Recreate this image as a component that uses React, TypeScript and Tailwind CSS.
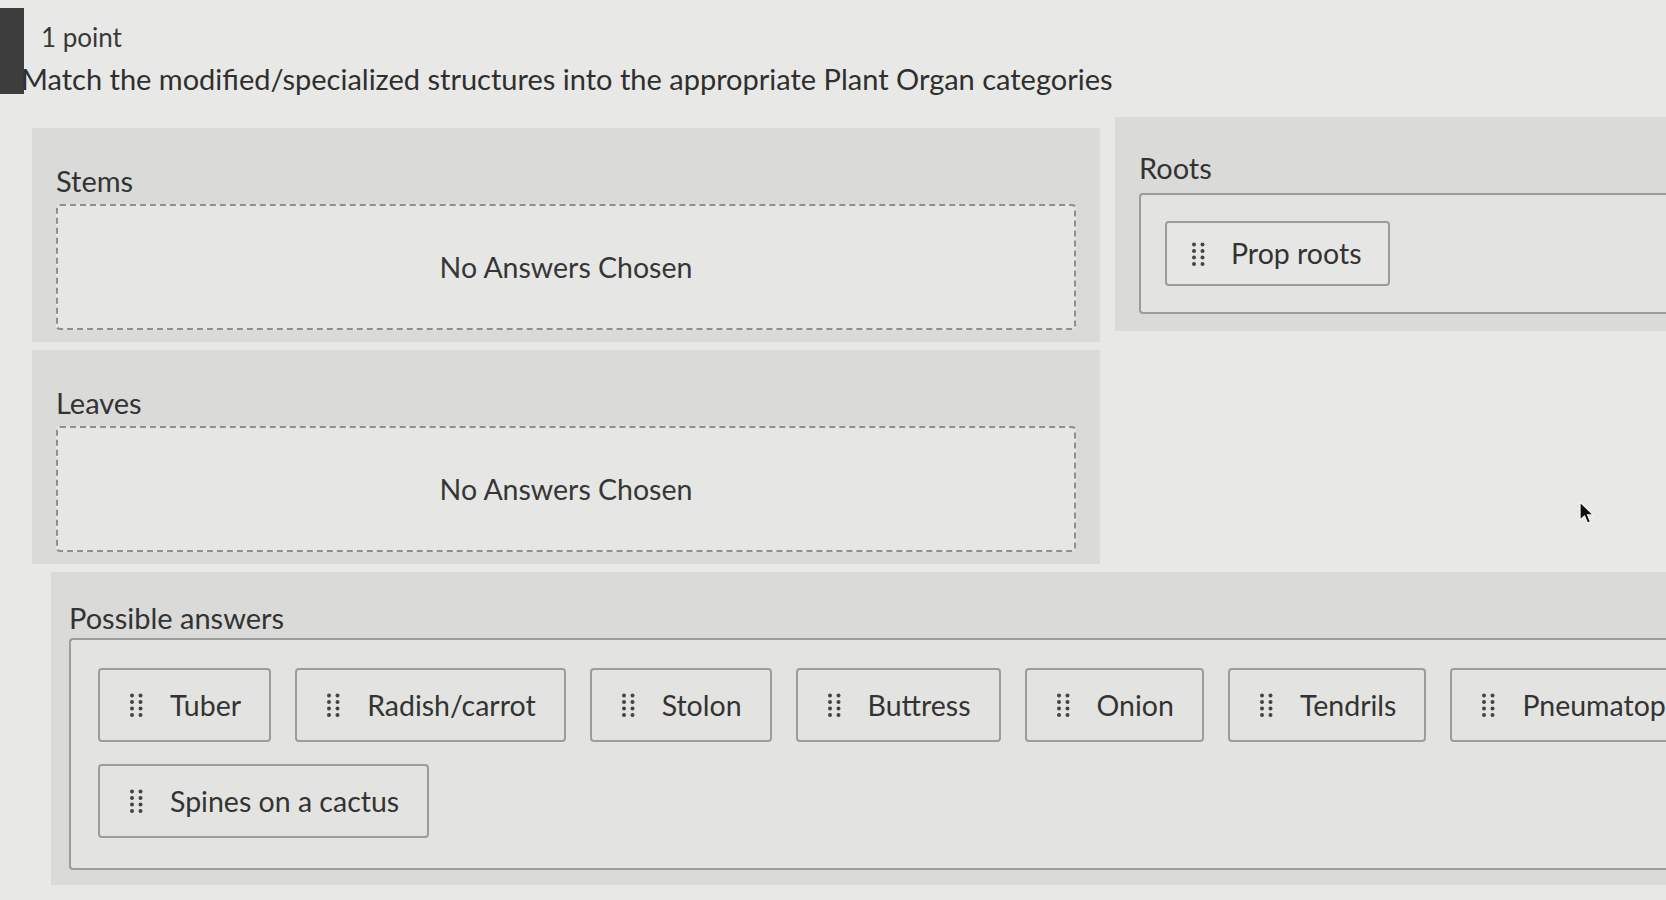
const answers = ["Tuber", "Radish/carrot", "Stolon", "Buttress", "Onion", "Tendrils", "Pneumatophores", "Spines on a cactus"];

function Handle() {
  return (
    <svg width="15" height="24" viewBox="0 0 15 24" className="shrink-0">
      {[2.5, 9, 15.5, 22].map((y) =>
        [3, 11.5].map((x) => <circle key={`${x}-${y}`} cx={x} cy={y} r="2" fill="#444" />)
      )}
    </svg>
  );
}

function Chip({ label }: { label: string }) {
  return (
    <div className="flex h-[74px] shrink-0 items-center gap-[26px] whitespace-nowrap rounded-[4px] border-2 border-[#9c9c9b] bg-[#e3e3e1] pl-[29px] pr-[28px] text-[28.5px] text-[#333]">
      <Handle />
      <span>{label}</span>
    </div>
  );
}

function DropZone({ label }: { label: string }) {
  return (
    <div className="flex h-[214px] flex-col bg-[#dadad8] px-[24px] pt-[34px]">
      <div className="text-[29px] leading-[38px] text-[#333]">{label}</div>
      <div className="mt-[4px] flex h-[126px] items-center justify-center rounded-[4px] border-2 border-dashed border-[#8f8f8e] bg-[#e6e6e4] text-[28.5px] text-[#363636]">
        No Answers Chosen
      </div>
    </div>
  );
}

export default function App() {
  return (
    <div
      className="relative h-[900px] w-[1666px] overflow-hidden bg-[#e8e8e6]"
      style={{ fontFamily: "Lato, 'Open Sans', sans-serif" }}
    >
      <div className="flex pt-[8px]">
        <div className="h-[86px] w-[24px] shrink-0 bg-[#3d3d3d]" />
        <div className="flex flex-col">
          <div className="pl-[17px] pt-[13px] text-[26px] leading-[32px] text-[#383838]">1 point</div>
          <div className="-ml-[3px] mt-[9px] whitespace-nowrap text-[29px] leading-[34px] text-[#2f2f2f]">
            Match the modified/specialized structures into the appropriate Plant Organ categories
          </div>
        </div>
      </div>

      <div className="mt-[32px] flex gap-[15px] pl-[32px]">
        <div className="flex w-[1068px] shrink-0 flex-col gap-[8px]">
          <DropZone label="Stems" />
          <DropZone label="Leaves" />
        </div>
        <div className="-mt-[11px] flex h-[214px] flex-1 flex-col bg-[#dadad8] pl-[24px] pt-[32px]">
          <div className="text-[29px] leading-[38px] text-[#333]">Roots</div>
          <div className="mt-[6px] flex h-[121px] items-center rounded-l-[4px] border-2 border-r-0 border-[#9c9c9b] bg-[#e3e3e1] pl-[24px]">
            <div className="flex h-[65px] items-center gap-[25px] rounded-[4px] border-2 border-[#9c9c9b] bg-[#e6e6e4] pl-[24px] pr-[27px] text-[28.5px] text-[#333]">
              <Handle />
              <span>Prop roots</span>
            </div>
          </div>
        </div>
      </div>

      <div className="ml-[51px] mt-[8px] flex h-[313px] flex-col bg-[#dadad8] pl-[18px] pt-[28px]">
        <div className="text-[29px] leading-[36px] text-[#333]">Possible answers</div>
        <div className="mt-[2px] flex h-[232px] flex-col gap-[22px] rounded-l-[4px] border-2 border-r-0 border-[#9c9c9b] bg-[#e3e3e1] pl-[27px] pt-[28px]">
          <div className="flex gap-[24px]">
            {answers.slice(0, 7).map((a) => (
              <Chip key={a} label={a} />
            ))}
          </div>
          <div className="flex gap-[24px]">
            <Chip label={answers[7]} />
          </div>
        </div>
      </div>

      <svg className="absolute left-[1578px] top-[500px]" width="18" height="26" viewBox="0 0 18 26">
        <path d="M2 2 L2 20 L6.5 16 L9.5 23 L12.5 21.8 L9.6 15 L15.5 15 Z" fill="#111" stroke="#f2f2f2" strokeWidth="1.3" />
      </svg>
    </div>
  );
}
